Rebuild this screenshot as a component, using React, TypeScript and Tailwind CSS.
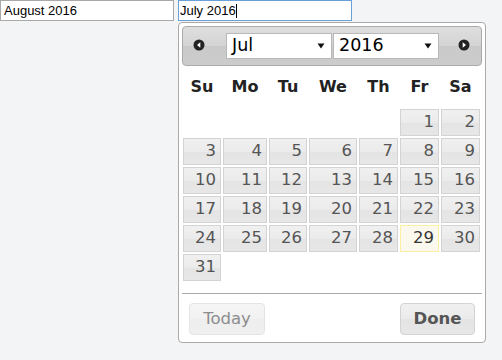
import React from "react";

const cols = "grid-cols-[40px_46px_40px_50px_41px_41px_41px]";
const days = ["Su", "Mo", "Tu", "We", "Th", "Fr", "Sa"];
// July 2016 starts on a Friday
const cells: (number | null)[] = [null, null, null, null, null, ...Array.from({ length: 31 }, (_, i) => i + 1)];

function CircleArrow({ dir }: { dir: "w" | "e" }) {
  return (
    <svg width="12" height="12" viewBox="0 0 12 12">
      <circle cx="6" cy="6" r="5.5" fill="#222" />
      {dir === "w" ? <path d="M7.3 3.2 L4 6 L7.3 8.8 Z" fill="#fff" /> : <path d="M4.7 3.2 L8 6 L4.7 8.8 Z" fill="#fff" />}
    </svg>
  );
}

function FakeSelect({ value }: { value: string }) {
  return (
    <div className="flex items-center justify-between w-[106px] h-[26px] bg-white border border-[#b8b8b8] pl-[5px] pr-[6px] text-[17.5px] text-black">
      <span className="leading-none">{value}</span>
      <svg width="8" height="6" viewBox="0 0 8 6"><path d="M0.5 0.5 H7.5 L4 5.5 Z" fill="#111" /></svg>
    </div>
  );
}

export default function App() {
  return (
    <div className="w-[502px] h-[360px] bg-[#f3f4f6] overflow-hidden relative" style={{ fontFamily: "'DejaVu Sans', Verdana, sans-serif" }}>
      <div className="flex gap-[4px] pt-0">
        <div className="w-[174px] h-[21px] bg-white border border-[#a9a9a9] pl-[3px] flex items-center text-[13px] text-black" style={{ fontFamily: "'Liberation Sans', Arial, sans-serif" }}>
          August 2016
        </div>
        <div className="w-[174px] h-[21px] bg-white border border-[#6a9fd8] pl-[1px] flex items-center text-[13px] text-black" style={{ fontFamily: "'Liberation Sans', Arial, sans-serif" }}>
          July 2016<span className="w-px h-[14px] bg-black" />
        </div>
      </div>

      <div className="ml-[178px] mt-[1px] w-[308px] h-[321px] bg-white border border-[#aaaaaa] rounded-[4px] p-[3px]">
        <div className="relative h-[40px] border border-[#aaaaaa] rounded-[4px] bg-[linear-gradient(180deg,#dedede_0%,#d4d4d4_50%,#cacaca_51%,#cccccc_100%)] flex items-center">
          <div className="absolute left-[10px] top-[12px]"><CircleArrow dir="w" /></div>
          <div className="absolute left-[275px] top-[12px]"><CircleArrow dir="e" /></div>
          <div className="ml-[43px] flex gap-[1px]">
            <FakeSelect value="Jul" />
            <FakeSelect value="2016" />
          </div>
        </div>

        <div className={`grid ${cols} h-[42px] items-center`}>
          {days.map(d => (
            <div key={d} className="text-center font-bold text-[16px] text-[#222]">{d}</div>
          ))}
        </div>

        <div className={`grid ${cols}`}>
          {cells.map((n, i) => (
            <div key={i} className="p-[1px] h-[29px]">
              {n !== null && (
                <div className={`h-[27px] border flex items-center justify-end pr-[4px] text-[16.5px] ${n === 29
                  ? "border-[#fcefa1] bg-[#fbf9ee] text-[#363636]"
                  : "border-[#d3d3d3] bg-[linear-gradient(180deg,#f0f0f0_0%,#ebebeb_50%,#e4e4e4_51%,#e7e7e7_100%)] text-[#555555]"}`}>
                  {n}
                </div>
              )}
            </div>
          ))}
        </div>

        <div className="mt-[11px] border-t border-[#aaaaaa] flex justify-between px-[7px] pt-[9px]">
          <div className="w-[76px] h-[32px] rounded-[4px] border border-[#e4e4e4] bg-[linear-gradient(180deg,#f5f5f5_0%,#f2f2f2_50%,#eeeeee_51%,#f0f0f0_100%)] flex items-center justify-center text-[16.5px] text-[#8c8c8c]">
            Today
          </div>
          <div className="w-[75px] h-[32px] rounded-[4px] border border-[#d3d3d3] bg-[linear-gradient(180deg,#f0f0f0_0%,#ebebeb_50%,#e4e4e4_51%,#e7e7e7_100%)] flex items-center justify-center text-[16.5px] font-bold text-[#555555]">
            Done
          </div>
        </div>
      </div>
    </div>
  );
}
